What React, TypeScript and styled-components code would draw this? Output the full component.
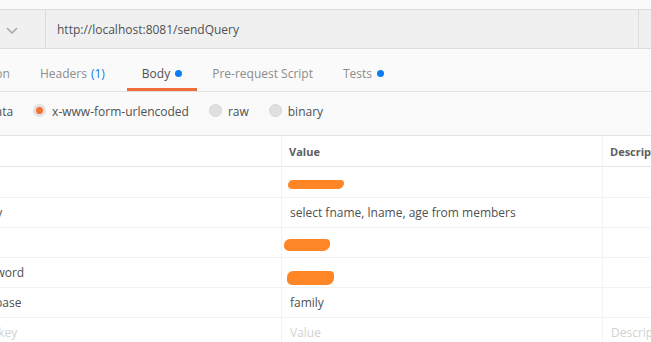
import React, { FC } from 'react'
import styled, { createGlobalStyle } from 'styled-components'

const GlobalStyle = createGlobalStyle`
  html, body {
    margin: 0;
    padding: 0;
    background: #ffffff;
    font-family: "Open Sans", "DejaVu Sans", sans-serif;
    font-size: 12px;
    overflow: hidden;
  }
`;

interface IParam {
  keyName: string;
  value?: string;
  redact?: { w: number; h: number; dx: number; dy: number };
}

const params: IParam[] = [
  { keyName: "user", redact: { w: 56, h: 9, dx: -2, dy: 2 } },
  { keyName: "query", value: "select fname, lname, age from members" },
  { keyName: "host", redact: { w: 46, h: 12, dx: -6, dy: 2 } },
  { keyName: "password", redact: { w: 47, h: 14, dx: -3, dy: 5 } },
  { keyName: "database", value: "family" },
];

const tabs = [
  { label: "Authorization" },
  { label: "Headers", count: 1 },
  { label: "Body", active: true, dot: true },
  { label: "Pre-request Script" },
  { label: "Tests", dot: true },
];

const bodyModes = [
  { label: "form-data" },
  { label: "x-www-form-urlencoded", checked: true },
  { label: "raw" },
  { label: "binary" },
];

const Chevron: FC = () => (
  <svg width="12" height="7" viewBox="0 0 12 7">
    <path d="M1 1 L6 6 L11 1" fill="none" stroke="#a6a6a6" strokeWidth="1.5" />
  </svg>
);

const App: FC = () => {
  return (
    <>
      <GlobalStyle />
      <Viewport>
        <TopStrip />
        <RequestBar>
          <MethodBox>
            <Chevron />
          </MethodBox>
          <UrlField>http://localhost:8081/sendQuery</UrlField>
          <ParamsBox />
        </RequestBar>

        <TabBar>
          {tabs.map((t) => (
            <Tab key={t.label} active={!!t.active}>
              {t.label}
              {t.count !== undefined && <Count>({t.count})</Count>}
              {t.dot && <Dot />}
            </Tab>
          ))}
        </TabBar>

        <ModeRow>
          {bodyModes.map((m) => (
            <ModeOption key={m.label}>
              <Radio checked={!!m.checked} />
              {m.label}
            </ModeOption>
          ))}
        </ModeRow>

        <Table>
          <HeadRow>
            <HeadCell />
            <HeadCell>Value</HeadCell>
            <HeadCell>Description</HeadCell>
          </HeadRow>
          <TableBody>
            {params.map((p) => (
              <Row key={p.keyName}>
                <Cell>{p.keyName}</Cell>
                <Cell>
                  {p.redact ? (
                    <Redaction
                      style={{
                        width: p.redact.w,
                        height: p.redact.h,
                        marginLeft: p.redact.dx,
                        marginTop: p.redact.dy * 2,
                      }}
                    />
                  ) : (
                    p.value
                  )}
                </Cell>
                <Cell />
              </Row>
            ))}
            <Row>
              <Cell placeholder>New key</Cell>
              <Cell placeholder>Value</Cell>
              <Cell placeholder>Description</Cell>
            </Row>
          </TableBody>
        </Table>
      </Viewport>
    </>
  );
};

export default App;

const Viewport = styled.div`
  width: 651px;
  height: 342px;
  overflow: hidden;
  background: #ffffff;
`;

const TopStrip = styled.div`
  height: 9px;
  background: #fafafa;
  border-bottom: 1px solid #dcdcdc;
`;

const RequestBar = styled.div`
  display: flex;
  height: 38px;
  background: #f0f0f0;
  border-bottom: 1px solid #dcdcdc;
`;

const MethodBox = styled.div`
  width: 46px;
  flex-shrink: 0;
  display: flex;
  align-items: center;
  padding-left: 6px;
  padding-top: 2px;
  box-sizing: border-box;
  border-right: 1px solid #dcdcdc;
`;

const UrlField = styled.div`
  width: 593px;
  flex-shrink: 0;
  display: flex;
  align-items: center;
  padding-left: 11px;
  box-sizing: border-box;
  color: #505050;
  border-right: 1px solid #dcdcdc;
`;

const ParamsBox = styled.div`
  flex: 1;
`;

/* the screenshot is cropped: the first tab is partly cut off on the left */
const TabBar = styled.div`
  display: flex;
  height: 42px;
  margin-left: -81px;
  background: #fafafa;
  border-bottom: 1px solid #e2e2e2;
`;

const Tab = styled.div<{ active: boolean }>`
  display: flex;
  align-items: center;
  height: 42px;
  box-sizing: border-box;
  padding: 10px 15px 0;
  white-space: nowrap;
  color: ${({ active }) => (active ? "#505050" : "#8c8c8c")};
  border-bottom: 3px solid ${({ active }) => (active ? "#f26b3a" : "transparent")};
`;

const Count = styled.span`
  color: #097bed;
  margin: 0 7px 0 4px;
`;

const Dot = styled.span`
  width: 7px;
  height: 7px;
  border-radius: 50%;
  background: #0c7cf0;
  margin-left: 5px;
`;

const ModeRow = styled.div`
  display: flex;
  align-items: center;
  gap: 20px;
  height: 43px;
  padding-bottom: 4px;
  box-sizing: border-box;
  margin-left: -62px;
  background: #fafafa;
  color: #505050;
  white-space: nowrap;
`;

const ModeOption = styled.label`
  display: flex;
  align-items: center;
  gap: 6px;
`;

const Radio = styled.span<{ checked: boolean }>`
  width: 13px;
  height: 13px;
  box-sizing: border-box;
  border-radius: 50%;
  background: ${({ checked }) => (checked ? "#f37234" : "#e0e0e0")};
  border: ${({ checked }) => (checked ? "3px solid #e2e2e2" : "1px solid #d6d6d6")};
  margin-top: -3px;
`;

const Table = styled.div`
  border-top: 1px solid #e2e2e2;
  margin-left: -38px;
`;

const HeadRow = styled.div`
  display: grid;
  grid-template-columns: 320px 321px 200px;
  height: 31px;
  box-sizing: border-box;
  border-bottom: 1px solid #e4e4e4;
`;

const HeadCell = styled.div`
  display: flex;
  align-items: center;
  padding-left: 7px;
  box-sizing: border-box;
  border-right: 1px solid #f2f2f2;
  font-size: 11px;
  font-weight: 700;
  color: #5e5e5e;
  white-space: nowrap;
`;

const TableBody = styled.div`
  padding-top: 1px;
`;

const Row = styled.div`
  display: grid;
  grid-template-columns: 320px 321px 200px;
  height: 30px;
  box-sizing: border-box;
  border-bottom: 1px solid #f2f2f2;
`;

const Cell = styled.div<{ placeholder?: boolean }>`
  display: flex;
  align-items: center;
  padding-left: 8px;
  box-sizing: border-box;
  border-right: 1px solid #f2f2f2;
  color: ${({ placeholder }) => (placeholder ? "#d2d2d2" : "#505050")};
  white-space: nowrap;
  overflow: hidden;
`;

const Redaction = styled.span`
  display: block;
  background: #ff8627;
  border-radius: 6px 4px 7px 5px;
`;
